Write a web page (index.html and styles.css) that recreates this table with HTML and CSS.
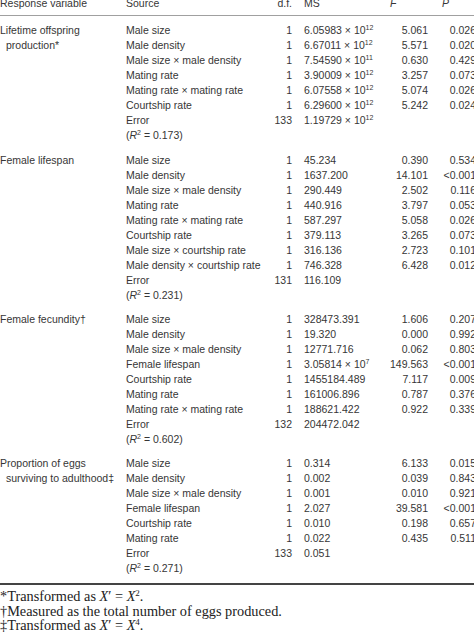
FILE: index.html
```html
<!DOCTYPE html>
<html>
<head>
<meta charset="utf-8">
<link rel="stylesheet" href="styles.css">
</head>
<body>
<div class="page">
<table class="anova">
<colgroup>
<col class="c-resp"><col class="c-src"><col class="c-df"><col class="c-ms"><col class="c-f"><col class="c-p">
</colgroup>
<thead>
<tr><th class="resp">Response variable</th><th class="src">Source</th><th class="df">d.f.</th><th class="ms">MS</th><th class="f"><i>F</i></th><th class="p"><i>P</i></th></tr>
</thead>
<tbody class="sec first">
<tr><td>Lifetime offspring</td><td>Male size</td><td class="df">1</td><td class="ms">6.05983 × 10<sup>12</sup></td><td class="f">5.061</td><td class="p">0.026</td></tr>
<tr><td class="ind">production*</td><td>Male density</td><td class="df">1</td><td class="ms">6.67011 × 10<sup>12</sup></td><td class="f">5.571</td><td class="p">0.020</td></tr>
<tr><td></td><td>Male size × male density</td><td class="df">1</td><td class="ms">7.54590 × 10<sup>11</sup></td><td class="f">0.630</td><td class="p">0.429</td></tr>
<tr><td></td><td>Mating rate</td><td class="df">1</td><td class="ms">3.90009 × 10<sup>12</sup></td><td class="f">3.257</td><td class="p">0.073</td></tr>
<tr><td></td><td>Mating rate × mating rate</td><td class="df">1</td><td class="ms">6.07558 × 10<sup>12</sup></td><td class="f">5.074</td><td class="p">0.026</td></tr>
<tr><td></td><td>Courtship rate</td><td class="df">1</td><td class="ms">6.29600 × 10<sup>12</sup></td><td class="f">5.242</td><td class="p">0.024</td></tr>
<tr><td></td><td>Error</td><td class="df">133</td><td class="ms">1.19729 × 10<sup>12</sup></td><td class="f"></td><td class="p"></td></tr>
<tr><td></td><td>(<i>R</i><sup>2</sup> = 0.173)</td><td></td><td></td><td></td><td></td></tr>
</tbody>
<tbody class="sec s2">
<tr><td>Female lifespan</td><td>Male size</td><td class="df">1</td><td class="ms">45.234</td><td class="f">0.390</td><td class="p">0.534</td></tr>
<tr><td></td><td>Male density</td><td class="df">1</td><td class="ms">1637.200</td><td class="f">14.101</td><td class="p">&lt;0.001</td></tr>
<tr><td></td><td>Male size × male density</td><td class="df">1</td><td class="ms">290.449</td><td class="f">2.502</td><td class="p">0.116</td></tr>
<tr><td></td><td>Mating rate</td><td class="df">1</td><td class="ms">440.916</td><td class="f">3.797</td><td class="p">0.053</td></tr>
<tr><td></td><td>Mating rate × mating rate</td><td class="df">1</td><td class="ms">587.297</td><td class="f">5.058</td><td class="p">0.026</td></tr>
<tr><td></td><td>Courtship rate</td><td class="df">1</td><td class="ms">379.113</td><td class="f">3.265</td><td class="p">0.073</td></tr>
<tr><td></td><td>Male size × courtship rate</td><td class="df">1</td><td class="ms">316.136</td><td class="f">2.723</td><td class="p">0.101</td></tr>
<tr><td></td><td>Male density × courtship rate</td><td class="df">1</td><td class="ms">746.328</td><td class="f">6.428</td><td class="p">0.012</td></tr>
<tr><td></td><td>Error</td><td class="df">131</td><td class="ms">116.109</td><td class="f"></td><td class="p"></td></tr>
<tr><td></td><td>(<i>R</i><sup>2</sup> = 0.231)</td><td></td><td></td><td></td><td></td></tr>
</tbody>
<tbody class="sec s3">
<tr><td>Female fecundity†</td><td>Male size</td><td class="df">1</td><td class="ms">328473.391</td><td class="f">1.606</td><td class="p">0.207</td></tr>
<tr><td></td><td>Male density</td><td class="df">1</td><td class="ms">19.320</td><td class="f">0.000</td><td class="p">0.992</td></tr>
<tr><td></td><td>Male size × male density</td><td class="df">1</td><td class="ms">12771.716</td><td class="f">0.062</td><td class="p">0.803</td></tr>
<tr><td></td><td>Female lifespan</td><td class="df">1</td><td class="ms">3.05814 × 10<sup>7</sup></td><td class="f">149.563</td><td class="p">&lt;0.001</td></tr>
<tr><td></td><td>Courtship rate</td><td class="df">1</td><td class="ms">1455184.489</td><td class="f">7.117</td><td class="p">0.009</td></tr>
<tr><td></td><td>Mating rate</td><td class="df">1</td><td class="ms">161006.896</td><td class="f">0.787</td><td class="p">0.376</td></tr>
<tr><td></td><td>Mating rate × mating rate</td><td class="df">1</td><td class="ms">188621.422</td><td class="f">0.922</td><td class="p">0.339</td></tr>
<tr><td></td><td>Error</td><td class="df">132</td><td class="ms">204472.042</td><td class="f"></td><td class="p"></td></tr>
<tr><td></td><td>(<i>R</i><sup>2</sup> = 0.602)</td><td></td><td></td><td></td><td></td></tr>
</tbody>
<tbody class="sec s4">
<tr><td>Proportion of eggs</td><td>Male size</td><td class="df">1</td><td class="ms">0.314</td><td class="f">6.133</td><td class="p">0.015</td></tr>
<tr><td class="ind">surviving to adulthood‡</td><td>Male density</td><td class="df">1</td><td class="ms">0.002</td><td class="f">0.039</td><td class="p">0.843</td></tr>
<tr><td></td><td>Male size × male density</td><td class="df">1</td><td class="ms">0.001</td><td class="f">0.010</td><td class="p">0.921</td></tr>
<tr><td></td><td>Female lifespan</td><td class="df">1</td><td class="ms">2.027</td><td class="f">39.581</td><td class="p">&lt;0.001</td></tr>
<tr><td></td><td>Courtship rate</td><td class="df">1</td><td class="ms">0.010</td><td class="f">0.198</td><td class="p">0.657</td></tr>
<tr><td></td><td>Mating rate</td><td class="df">1</td><td class="ms">0.022</td><td class="f">0.435</td><td class="p">0.511</td></tr>
<tr><td></td><td>Error</td><td class="df">133</td><td class="ms">0.051</td><td class="f"></td><td class="p"></td></tr>
<tr class="last"><td></td><td>(<i>R</i><sup>2</sup> = 0.271)</td><td></td><td></td><td></td><td></td></tr>
</tbody>
</table>
<div class="notes">
<p>*Transformed as <i>X</i>′ = <i>X</i><sup>2</sup>.</p>
<p>†Measured as the total number of eggs produced.</p>
<p>‡Transformed as <i>X</i>′ = <i>X</i><sup>4</sup>.</p>
</div>
</div>
</body>
</html>
```
FILE: styles.css
```css
html, body {
  margin: 0;
  padding: 0;
  background: #ffffff;
}
body {
  width: 474px;
  height: 632px;
  overflow: hidden;
}
.page {
  margin-top: -4px;
  width: 480px;
}
.anova {
  border-collapse: collapse;
  border-spacing: 0;
  table-layout: fixed;
  width: 476px;
  font-family: "Liberation Sans", Arial, sans-serif;
  font-size: 10.5px;
  color: #363636;
  border-bottom: 2px solid #444444;
}
.c-resp { width: 126px; }
.c-src { width: 142px; }
.c-df { width: 24px; }
.c-ms { width: 98px; }
.c-f { width: 38px; }
.c-p { width: 48px; }

.anova th, .anova td {
  padding: 0;
  line-height: 15px;
  height: 15px;
  white-space: nowrap;
  text-align: left;
  font-weight: normal;
  vertical-align: middle;
  overflow: visible;
}
.anova thead th {
  padding-bottom: 4px;
  border-bottom: 1px solid #a0a0a0;
}
.anova th.df { text-align: right; }
.anova th.ms { padding-left: 12px; }
.anova th.p { padding-left: 14px; }
.anova td.df { text-align: right; }
.anova td.ms { padding-left: 12px; }
.anova td.f { text-align: right; }
.anova td.p { text-align: right; }
.anova td.ind { padding-left: 6px; }

.sec.first tr:first-child td { padding-top: 7px; }
.sec.s2 tr:first-child td { padding-top: 10px; }
.sec.s3 tr:first-child td { padding-top: 9px; }
.sec.s4 tr:first-child td { padding-top: 9px; }
.anova tr.last td { padding-bottom: 7px; }

.anova sup {
  font-size: 7px;
  line-height: 0;
  vertical-align: 4px;
}
.notes {
  padding-top: 4px;
  font-family: "Liberation Serif", "Times New Roman", serif;
  font-size: 14.3px;
  color: #222222;
}
.notes p {
  margin: 0;
  line-height: 14.5px;
}
.notes sup {
  font-size: 9px;
  line-height: 0;
  vertical-align: 5px;
}
```
